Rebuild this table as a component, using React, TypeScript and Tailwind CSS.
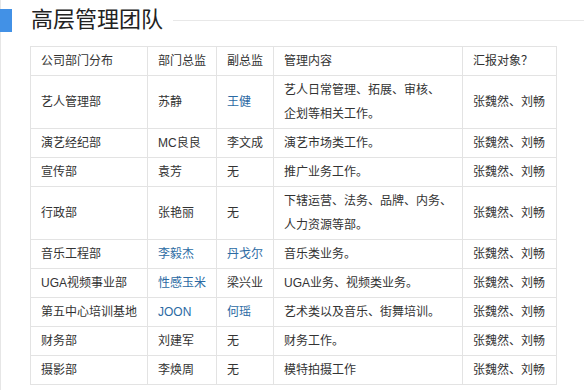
const rows: { dept: string; head: string; headLink?: boolean; vice: string; viceLink?: boolean; duty: string[] }[] = [
  { dept: '艺人管理部', head: '苏静', vice: '王健', viceLink: true, duty: ['艺人日常管理、拓展、审核、', '企划等相关工作。'] },
  { dept: '演艺经纪部', head: 'MC良良', vice: '李文成', duty: ['演艺市场类工作。'] },
  { dept: '宣传部', head: '袁芳', vice: '无', duty: ['推广业务工作。'] },
  { dept: '行政部', head: '张艳丽', vice: '无', duty: ['下辖运营、法务、品牌、内务、', '人力资源等部。'] },
  { dept: '音乐工程部', head: '李毅杰', headLink: true, vice: '丹戈尔', viceLink: true, duty: ['音乐类业务。'] },
  { dept: 'UGA视频事业部', head: '性感玉米', headLink: true, vice: '梁兴业', duty: ['UGA业务、视频类业务。'] },
  { dept: '第五中心培训基地', head: 'JOON', headLink: true, vice: '何瑶', viceLink: true, duty: ['艺术类以及音乐、街舞培训。'] },
  { dept: '财务部', head: '刘建军', vice: '无', duty: ['财务工作。'] },
  { dept: '摄影部', head: '李焕周', vice: '无', duty: ['模特拍摄工作'] },
];

const cell = 'border border-[#e3e3e3] px-[10px] py-[2px] align-middle text-left font-normal';

const Name = ({ text, link }: { text: string; link?: boolean }) =>
  link ? <a className="text-[#2b6aa3]">{text}</a> : <>{text}</>;

export default function App() {
  return (
    <div
      className="w-[584px] h-[390px] bg-white overflow-hidden text-[12px] leading-[24px] text-[#333]"
      style={{ fontFamily: '"Liberation Sans", "Noto Sans CJK SC", sans-serif' }}
    >
      <div className="h-full border-l border-[#e6e6e6]">
        <div className="flex items-center h-[46px] pb-[6px]">
          <div className="w-[12px] h-[23px] bg-[#4291e6] -ml-px" />
          <h2 className="ml-[19px] text-[22px] leading-[26px] text-[#222]">高层管理团队</h2>
          <div className="flex-1 ml-[10px] h-px bg-[#e8e8e8]" />
        </div>
        <table className="ml-[29px] border-collapse table-fixed w-[526px]">
          <colgroup>
            <col className="w-[117px]" />
            <col className="w-[69px]" />
            <col className="w-[57px]" />
            <col className="w-[189px]" />
            <col className="w-[94px]" />
          </colgroup>
          <thead>
            <tr>
              <th className={cell}>公司部门分布</th>
              <th className={cell}>部门总监</th>
              <th className={cell}>副总监</th>
              <th className={cell}>管理内容</th>
              <th className={cell}>汇报对象？</th>
            </tr>
          </thead>
          <tbody>
            {rows.map((r) => (
              <tr key={r.dept}>
                <td className={cell}>{r.dept}</td>
                <td className={cell}><Name text={r.head} link={r.headLink} /></td>
                <td className={cell}><Name text={r.vice} link={r.viceLink} /></td>
                <td className={cell + ' whitespace-nowrap'}>
                  {r.duty.map((d) => (
                    <div key={d}>{d}</div>
                  ))}
                </td>
                <td className={cell}>张魏然、刘畅</td>
              </tr>
            ))}
          </tbody>
        </table>
      </div>
    </div>
  );
}
